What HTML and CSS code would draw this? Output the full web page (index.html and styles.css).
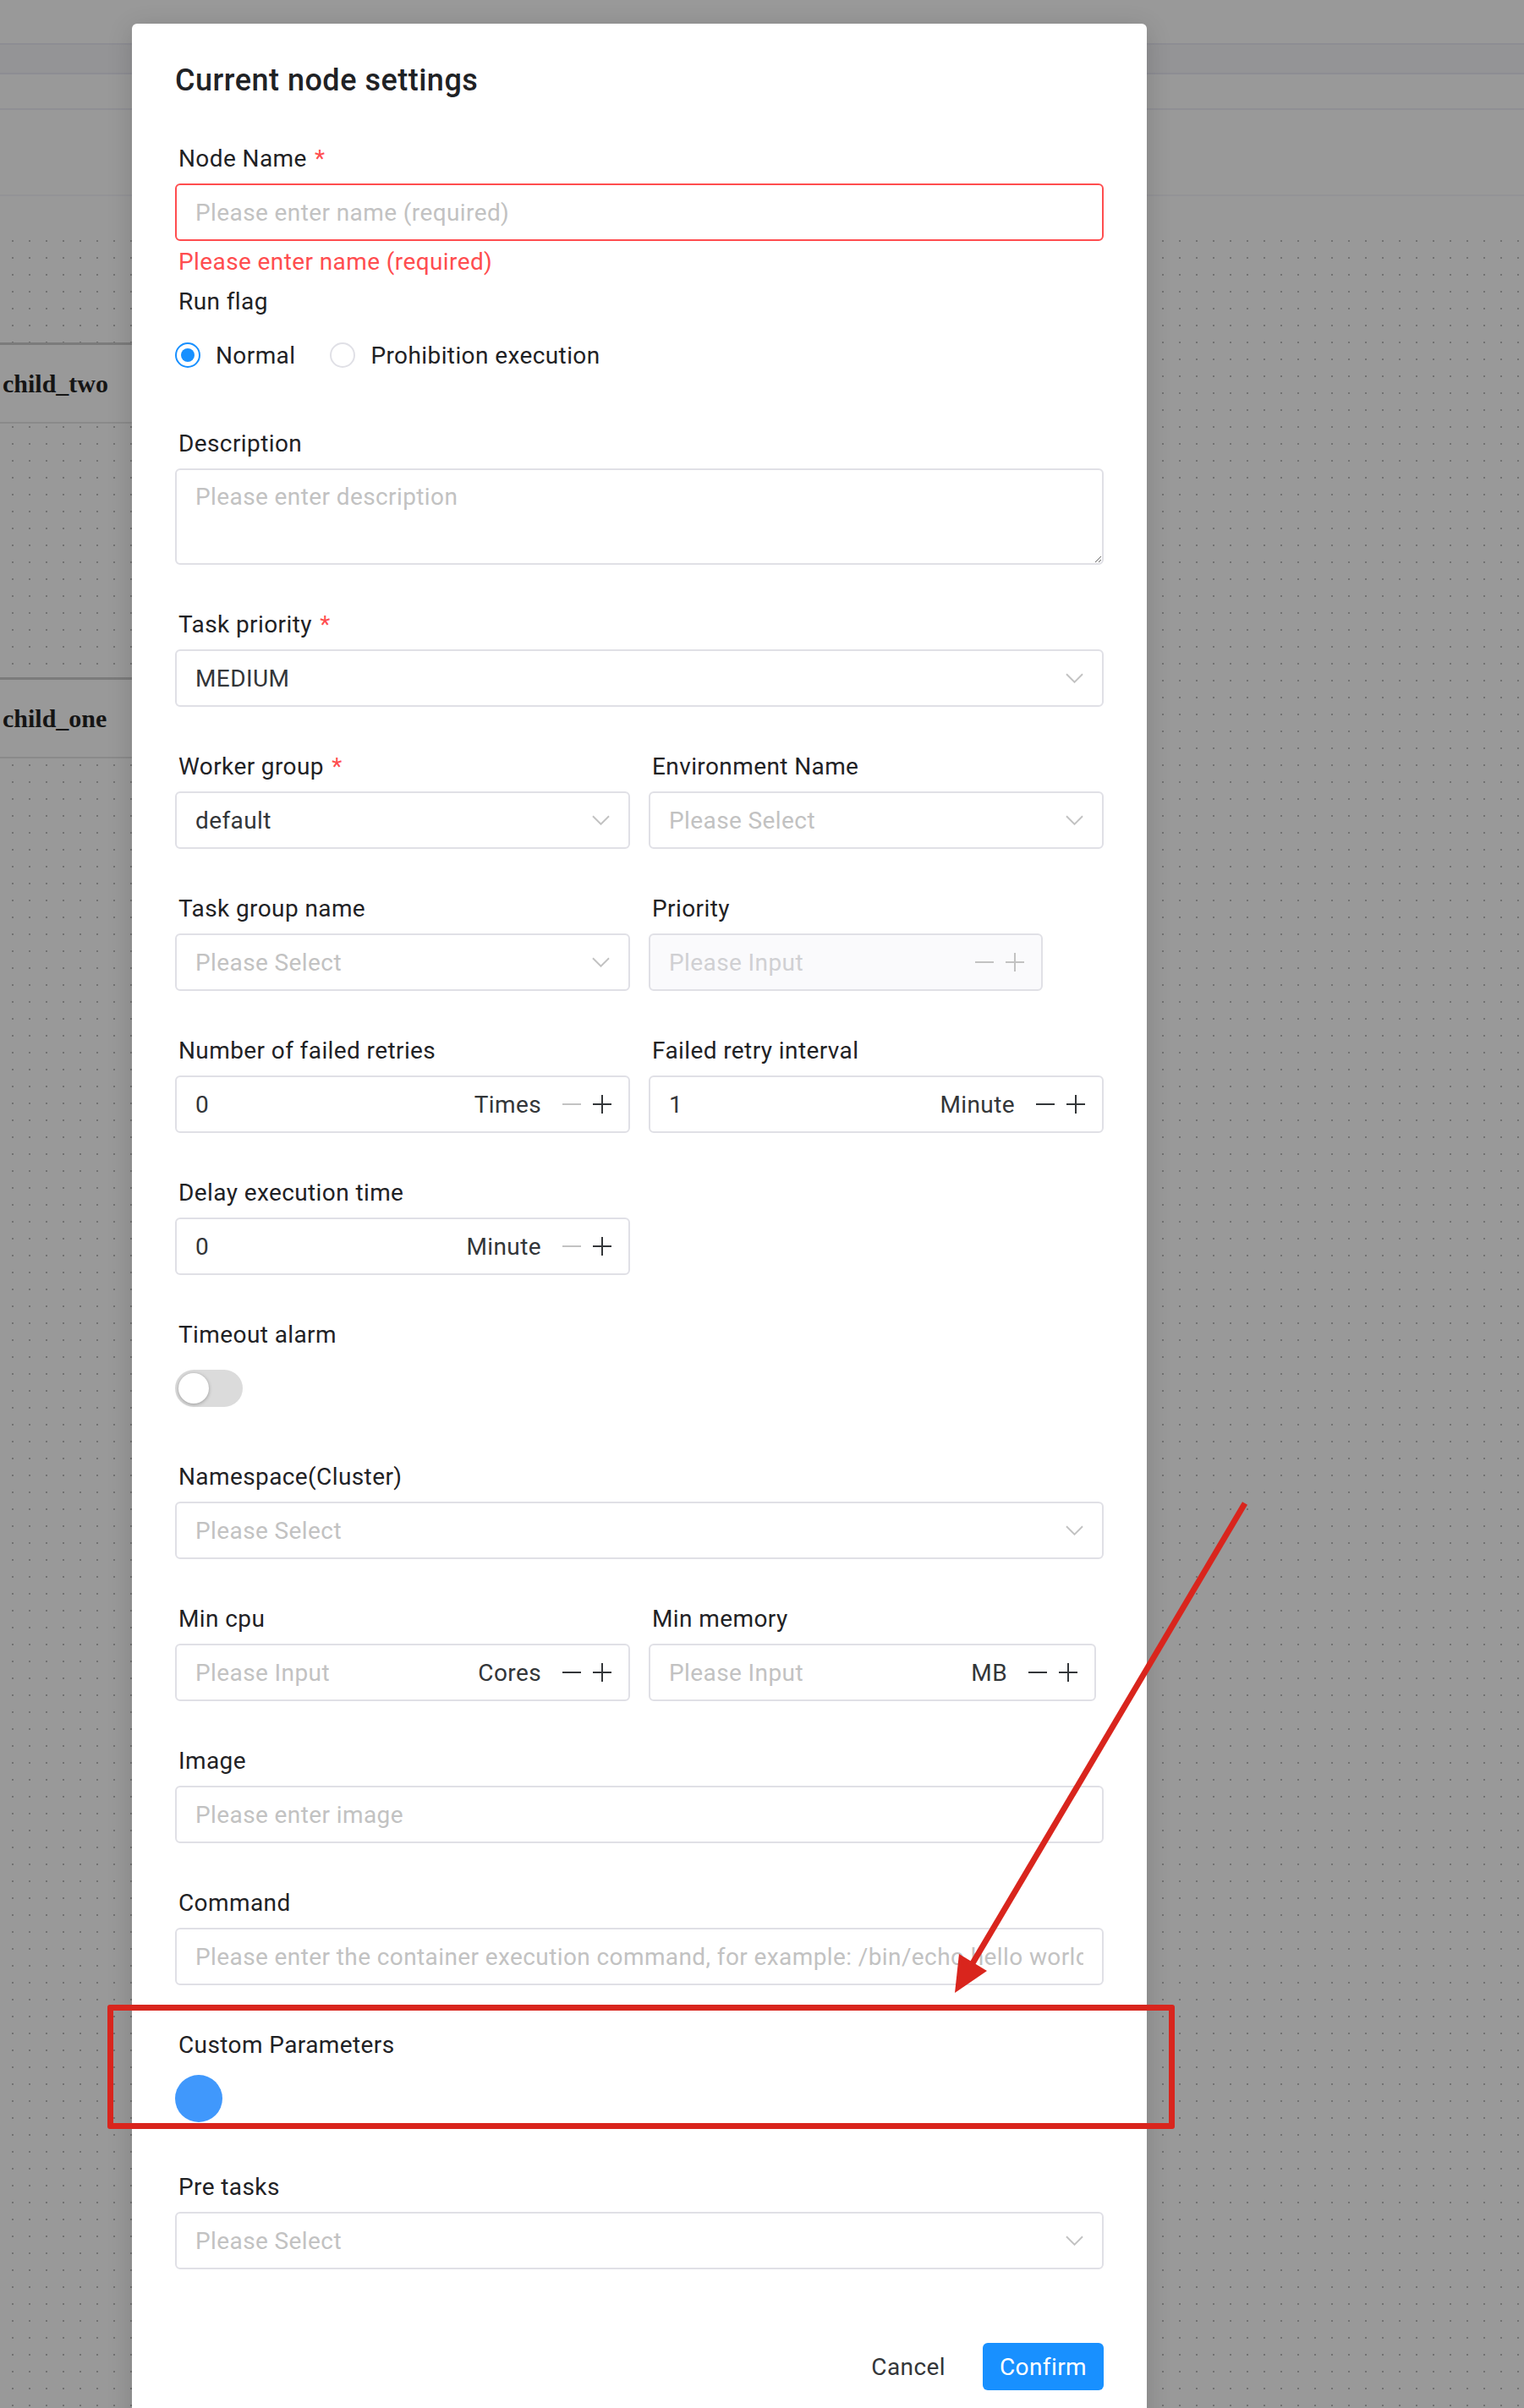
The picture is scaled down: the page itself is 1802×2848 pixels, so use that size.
FILE: index.html
```html
<!DOCTYPE html>
<html lang="en">
<head>
<meta charset="utf-8">
<title>Current node settings</title>
<link rel="stylesheet" href="styles.css">
</head>
<body>

<!-- workflow canvas behind the modal -->
<div class="canvas">
	<div class="bar-top"></div>
	<div class="bar-tabs"></div>
	<div class="bar-tools"></div>
	<div class="bar-crumbs"></div>
	<div class="grid-pad"></div>
	<div class="grid">
		<div class="dag-node node-two"><span class="dag-name">child_two</span></div>
		<div class="dag-node node-one"><span class="dag-name">child_one</span></div>
	</div>
</div>

<div class="modal">
	<h2 class="modal-title">Current node settings</h2>

	<form class="form">
		<div class="item item-error">
			<label class="label">Node Name <span class="req">*</span></label>
			<input class="field field-error" placeholder="Please enter name (required)">
			<div class="feedback">Please enter name (required)</div>
		</div>

		<div class="item">
			<label class="label">Run flag</label>
			<div class="control radios">
				<span class="radio checked"><i></i>Normal</span>
				<span class="radio"><i></i>Prohibition execution</span>
			</div>
		</div>

		<div class="item">
			<label class="label">Description</label>
			<textarea class="field textarea" placeholder="Please enter description"></textarea>
		</div>

		<div class="item">
			<label class="label">Task priority <span class="req">*</span></label>
			<div class="field select">
				<span class="value">MEDIUM</span>
				<svg class="chevron" viewBox="0 0 22 12"><polyline points="1,1 11,11 21,1"/></svg>
			</div>
		</div>

		<div class="row">
			<div class="item">
				<label class="label">Worker group <span class="req">*</span></label>
				<div class="field select">
					<span class="value">default</span>
					<svg class="chevron" viewBox="0 0 22 12"><polyline points="1,1 11,11 21,1"/></svg>
				</div>
			</div>
			<div class="item">
				<label class="label">Environment Name</label>
				<div class="field select">
					<span class="value placeholder">Please Select</span>
					<svg class="chevron" viewBox="0 0 22 12"><polyline points="1,1 11,11 21,1"/></svg>
				</div>
			</div>
		</div>

		<div class="row">
			<div class="item">
				<label class="label">Task group name</label>
				<div class="field select">
					<span class="value placeholder">Please Select</span>
					<svg class="chevron" viewBox="0 0 22 12"><polyline points="1,1 11,11 21,1"/></svg>
				</div>
			</div>
			<div class="item">
				<label class="label">Priority</label>
				<div class="field number disabled w-priority">
					<input placeholder="Please Input" disabled>
					<span class="steps">
						<svg class="ico off" viewBox="0 0 22 22"><path d="M0 11h22"/></svg>
						<svg class="ico off" viewBox="0 0 22 22"><path d="M0 11h22M11 0v22"/></svg>
					</span>
				</div>
			</div>
		</div>

		<div class="row">
			<div class="item">
				<label class="label">Number of failed retries</label>
				<div class="field number">
					<input value="0">
					<span class="suffix">Times</span>
					<span class="steps">
						<svg class="ico off" viewBox="0 0 22 22"><path d="M0 11h22"/></svg>
						<svg class="ico" viewBox="0 0 22 22"><path d="M0 11h22M11 0v22"/></svg>
					</span>
				</div>
			</div>
			<div class="item">
				<label class="label">Failed retry interval</label>
				<div class="field number">
					<input value="1">
					<span class="suffix">Minute</span>
					<span class="steps">
						<svg class="ico" viewBox="0 0 22 22"><path d="M0 11h22"/></svg>
						<svg class="ico" viewBox="0 0 22 22"><path d="M0 11h22M11 0v22"/></svg>
					</span>
				</div>
			</div>
		</div>

		<div class="row">
			<div class="item">
				<label class="label">Delay execution time</label>
				<div class="field number">
					<input value="0">
					<span class="suffix">Minute</span>
					<span class="steps">
						<svg class="ico off" viewBox="0 0 22 22"><path d="M0 11h22"/></svg>
						<svg class="ico" viewBox="0 0 22 22"><path d="M0 11h22M11 0v22"/></svg>
					</span>
				</div>
			</div>
		</div>

		<div class="item">
			<label class="label">Timeout alarm</label>
			<div class="control">
				<span class="switch"></span>
			</div>
		</div>

		<div class="item">
			<label class="label">Namespace(Cluster)</label>
			<div class="field select">
				<span class="value placeholder">Please Select</span>
				<svg class="chevron" viewBox="0 0 22 12"><polyline points="1,1 11,11 21,1"/></svg>
			</div>
		</div>

		<div class="row">
			<div class="item">
				<label class="label">Min cpu</label>
				<div class="field number">
					<input placeholder="Please Input">
					<span class="suffix">Cores</span>
					<span class="steps">
						<svg class="ico" viewBox="0 0 22 22"><path d="M0 11h22"/></svg>
						<svg class="ico" viewBox="0 0 22 22"><path d="M0 11h22M11 0v22"/></svg>
					</span>
				</div>
			</div>
			<div class="item">
				<label class="label">Min memory</label>
				<div class="field number w-memory">
					<input placeholder="Please Input">
					<span class="suffix">MB</span>
					<span class="steps">
						<svg class="ico" viewBox="0 0 22 22"><path d="M0 11h22"/></svg>
						<svg class="ico" viewBox="0 0 22 22"><path d="M0 11h22M11 0v22"/></svg>
					</span>
				</div>
			</div>
		</div>

		<div class="item">
			<label class="label">Image</label>
			<input class="field" placeholder="Please enter image">
		</div>

		<div class="item">
			<label class="label">Command</label>
			<input class="field" placeholder="Please enter the container execution command, for example: /bin/echo hello world">
		</div>

		<div class="item">
			<label class="label">Custom Parameters</label>
			<div class="control">
				<button type="button" class="circle-btn"></button>
			</div>
		</div>

		<div class="item">
			<label class="label">Pre tasks</label>
			<div class="field select">
				<span class="value placeholder">Please Select</span>
				<svg class="chevron" viewBox="0 0 22 12"><polyline points="1,1 11,11 21,1"/></svg>
			</div>
		</div>
	</form>

	<div class="footer">
		<button type="button" class="btn">Cancel</button>
		<button type="button" class="btn btn-primary">Confirm</button>
	</div>
</div>

<!-- review annotation drawn over the screenshot -->
<div class="mark-box"></div>
<svg class="mark-arrow" viewBox="0 0 1802 2848">
	<line x1="1472" y1="1778" x2="1150" y2="2322"/>
	<polygon points="1129,2357 1134,2311 1167,2331"/>
</svg>

</body>
</html>
```

FILE: styles.css
```css
html, body { margin: 0; padding: 0; }

body {
	position: relative;
	width: 1802px;
	height: 2848px;
	overflow: hidden;
	background: #999;
	font-family: Roboto, "Liberation Sans", sans-serif;
	color: #1f2225;
}

/* canvas behind the overlay */
.canvas {
	display: flex;
	flex-direction: column;
	height: 100%;
}

.bar-top { height: 51px; }

.bar-tabs {
	height: 33px;
	background: #949496;
	border-top: 2px solid #8d8d93;
	border-bottom: 2px solid #8d8d93;
}

.bar-tools { height: 40px; border-bottom: 2px solid #8f8f94; }
.bar-crumbs { height: 100px; border-bottom: 2px solid #939396; }
.grid-pad { height: 44px; }

.grid {
	flex: 1;
	position: relative;
	background-image: radial-gradient(circle at 1px 1px, #727272 1px, transparent 1.5px);
	background-size: 20px 20px;
	background-position: 14px 8px;
}

.dag-node {
	position: absolute;
	left: 0;
	width: 560px;
	height: 91px;
	display: flex;
	align-items: center;
	background: #999;
	border-top: 3px solid #7b7b7b;
	border-bottom: 2px solid #8a8a8a;
}

.node-two { top: 129px; }
.node-one { top: 525px; }

.dag-name {
	padding-left: 3px;
	white-space: nowrap;
	font-family: "Liberation Serif", serif;
	font-weight: bold;
	font-size: 30px;
	color: #151515;
}

/* modal card */
.modal {
	position: absolute;
	left: 156px;
	top: 28px;
	bottom: -60px;
	width: 1200px;
	box-sizing: border-box;
	padding: 42px 51px 0;
	background: #fff;
	border-radius: 6px;
	box-shadow: 0 6px 30px rgba(0, 0, 0, 0.16);
	letter-spacing: 0.4px;
}

.modal-title {
	margin: 0 0 48px;
	font-size: 36px;
	line-height: 50px;
	font-weight: 500;
	letter-spacing: 0.5px;
	color: #1f2225;
}

.form { display: flex; flex-direction: column; }

.item { margin-bottom: 51px; min-width: 0; }
.item-error { margin-bottom: 0; }

.row {
	display: grid;
	grid-template-columns: minmax(0, 1fr) minmax(0, 1fr);
	column-gap: 22px;
}

.label {
	display: block;
	padding: 0 0 9px 4px;
	font-size: 28px;
	line-height: 40px;
	color: #1f2225;
}

.req { color: #ff4d4f; margin-left: 2px; }

.feedback {
	height: 51px;
	padding: 1px 0 0 4px;
	font-size: 28px;
	line-height: 48px;
	color: #ff4d4f;
}

.control {
	height: 68px;
	display: flex;
	align-items: center;
}

/* inputs */
.field {
	display: flex;
	align-items: center;
	width: 100%;
	height: 68px;
	box-sizing: border-box;
	margin: 0;
	padding: 0 22px;
	border: 2px solid #e0e0e6;
	border-radius: 6px;
	background: #fff;
	font-family: inherit;
	font-size: 28px;
	letter-spacing: 0.4px;
	color: #333639;
	outline: none;
}

.field::placeholder,
.field input::placeholder { color: #c2c2c2; opacity: 1; }

.field-error { border-color: #ff4d4f; }

.textarea {
	display: block;
	height: 114px;
	padding: 12px 22px;
	line-height: 40px;
	resize: vertical;
}

.select .value { flex: 1; }
.placeholder { color: #c2c2c2; }

.chevron {
	width: 21px;
	height: 12px;
	fill: none;
	stroke: #c2c2c2;
	stroke-width: 2;
}

.number { padding-right: 20px; }

.number input {
	flex: 1;
	width: 0;
	min-width: 0;
	padding: 0;
	border: none;
	outline: none;
	background: transparent;
	font-family: inherit;
	font-size: 28px;
	letter-spacing: 0.4px;
	color: #333639;
}

.suffix { color: #333639; }

.steps {
	display: flex;
	gap: 14px;
	margin-left: 25px;
}

.ico {
	width: 22px;
	height: 22px;
	fill: none;
	stroke: #333639;
	stroke-width: 2;
}

.ico.off { stroke: #c2c2c2; }

.disabled { background: #fafafc; }
.disabled input::placeholder { color: #d0d0d3; }
.w-priority { width: 466px; }
.w-memory { width: 529px; }

/* radio */
.radio {
	display: flex;
	align-items: center;
	gap: 18px;
	margin-right: 41px;
	font-size: 28px;
	color: #1f2225;
}

.radio i {
	width: 30px;
	height: 30px;
	box-sizing: border-box;
	border: 2px solid #e0e0e6;
	border-radius: 50%;
	display: flex;
	align-items: center;
	justify-content: center;
}

.radio.checked i { border-color: #1890ff; }

.radio.checked i::after {
	content: "";
	width: 16px;
	height: 16px;
	border-radius: 50%;
	background: #1890ff;
}

/* switch */
.switch {
	display: flex;
	align-items: center;
	width: 80px;
	height: 44px;
	box-sizing: border-box;
	padding: 0 4px;
	border-radius: 22px;
	background: #dbdbdb;
}

.switch::before {
	content: "";
	width: 36px;
	height: 36px;
	border-radius: 50%;
	background: #fff;
	box-shadow: 0 1px 4px rgba(0, 0, 0, 0.3);
}

.circle-btn {
	width: 56px;
	height: 56px;
	padding: 0;
	border: none;
	border-radius: 50%;
	background: #4098fc;
}

/* footer */
.footer {
	display: flex;
	justify-content: flex-end;
	gap: 24px;
	margin-top: 36px;
}

.btn {
	height: 56px;
	padding: 0 20px;
	border: none;
	border-radius: 6px;
	background: transparent;
	font-family: inherit;
	font-size: 28px;
	letter-spacing: 0.4px;
	color: #333639;
}

.btn-primary {
	background: #1890ff;
	color: #fff;
}

/* annotation */
.mark-box {
	position: absolute;
	left: 127px;
	top: 2371px;
	width: 1262px;
	height: 147px;
	box-sizing: border-box;
	border: 7px solid #d9251d;
	border-radius: 3px;
}

.mark-arrow {
	position: absolute;
	left: 0;
	top: 0;
	width: 1802px;
	height: 2848px;
}

.mark-arrow line { stroke: #d9251d; stroke-width: 7; }
.mark-arrow polygon { fill: #d9251d; }
```
